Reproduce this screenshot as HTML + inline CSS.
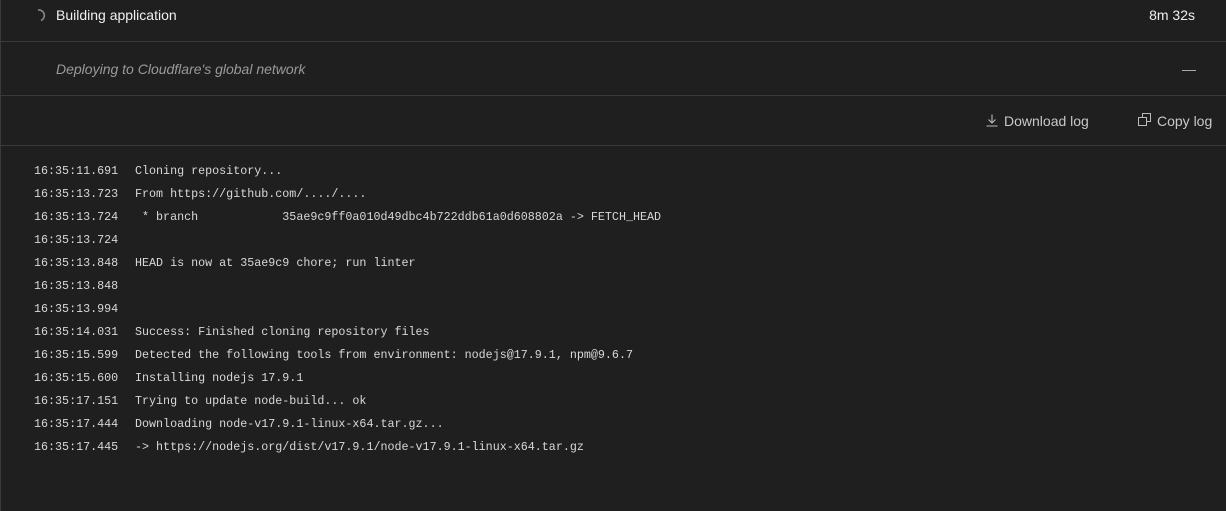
<!DOCTYPE html>
<html><head><style>
body{margin:0;background:#1f1f1f;width:1226px;height:511px;overflow:hidden;font-family:"Liberation Sans",sans-serif;}
.wrap{position:absolute;left:0;top:0;width:1226px;height:511px;border-left:1px solid #3a3a3a;box-sizing:border-box}
.row{position:absolute;left:0;right:0;border-bottom:1px solid #3a3a3a}
.t{position:absolute;white-space:pre}
.log{position:absolute;left:33px;top:162px;font-family:"Liberation Mono",monospace;font-size:11.7px;color:#d8d8d8;}
.log div{height:23px;line-height:18px;white-space:pre}
.log span{display:inline-block;width:101px}
</style></head><body><div class="wrap">
<div class="row" style="top:0;height:41px"></div>
<svg style="position:absolute;left:33px;top:8px" width="14" height="14" viewBox="0 0 14 14"><path d="M4 2 A5.5 5.5 0 0 1 7 12.5" fill="none" stroke="#8a8a8a" stroke-width="1.6"/></svg>
<div class="t" style="left:55px;top:7px;font-size:14px;color:#f0f0f0">Building application</div>
<div class="t" style="right:31px;top:7px;font-size:14px;color:#f0f0f0">8m 32s</div>
<div class="row" style="top:42px;height:53px"></div>
<div class="t" style="left:55px;top:61px;font-size:14px;font-style:italic;color:#9a9a9a">Deploying to Cloudflare's global network</div>
<div style="position:absolute;left:1181px;top:70px;width:14px;height:1px;background:#aaa"></div>
<div class="row" style="top:96px;height:49px"></div>
<svg style="position:absolute;left:985px;top:114px" width="12" height="13" viewBox="0 0 12 13"><path d="M6 0.5V9M2.5 5.5L6 9L9.5 5.5M0.5 12H11.5" fill="none" stroke="#bbb" stroke-width="1.1"/></svg>
<div class="t" style="left:1003px;top:113px;font-size:14px;color:#c8c8c8">Download log</div>
<svg style="position:absolute;left:1137px;top:113px" width="14" height="14" viewBox="0 0 14 14"><rect x="0.5" y="4.5" width="8" height="8" fill="none" stroke="#bbb"/><path d="M4.5 4.5V0.5H12.5V8.5H8.5" fill="none" stroke="#bbb"/></svg>
<div class="t" style="left:1156px;top:113px;font-size:14px;color:#c8c8c8">Copy log</div>
<div class="log">
<div><span>16:35:11.691</span>Cloning repository...</div>
<div><span>16:35:13.723</span>From https://github.com/..../....</div>
<div><span>16:35:13.724</span> * branch            35ae9c9ff0a010d49dbc4b722ddb61a0d608802a -> FETCH_HEAD</div>
<div><span>16:35:13.724</span></div>
<div><span>16:35:13.848</span>HEAD is now at 35ae9c9 chore; run linter</div>
<div><span>16:35:13.848</span></div>
<div><span>16:35:13.994</span></div>
<div><span>16:35:14.031</span>Success: Finished cloning repository files</div>
<div><span>16:35:15.599</span>Detected the following tools from environment: nodejs@17.9.1, npm@9.6.7</div>
<div><span>16:35:15.600</span>Installing nodejs 17.9.1</div>
<div><span>16:35:17.151</span>Trying to update node-build... ok</div>
<div><span>16:35:17.444</span>Downloading node-v17.9.1-linux-x64.tar.gz...</div>
<div><span>16:35:17.445</span>-> https://nodejs.org/dist/v17.9.1/node-v17.9.1-linux-x64.tar.gz</div>
</div>
</div></body></html>
